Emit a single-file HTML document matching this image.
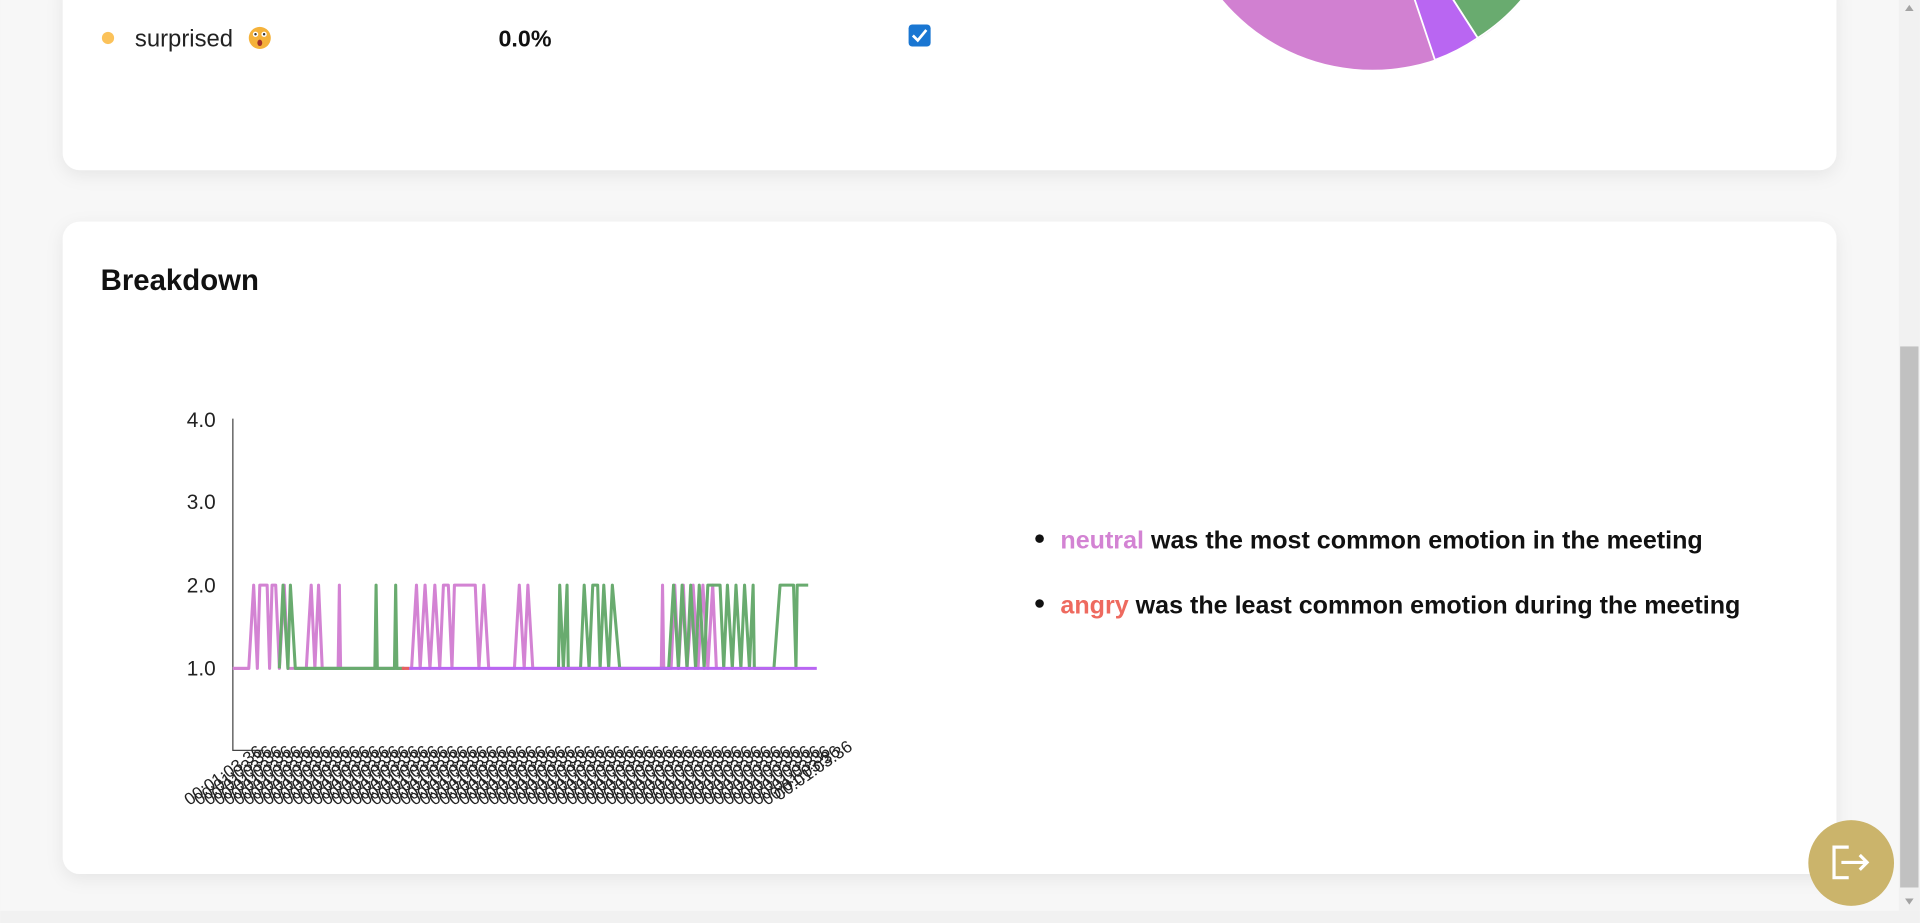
<!DOCTYPE html>
<html><head><meta charset="utf-8"><style>
html,body{margin:0;padding:0;width:1920px;height:923px;overflow:hidden;background:#f6f6f6}
svg{display:block}
text{font-family:"Liberation Sans","DejaVu Sans",sans-serif}
</style></head><body>
<svg width="1920" height="923" viewBox="0 0 1568 754" xmlns="http://www.w3.org/2000/svg">
<defs>
<filter id="sh" x="-5%" y="-10%" width="110%" height="130%"><feDropShadow dx="0" dy="4" stdDeviation="7" flood-color="#000" flood-opacity="0.07"/></filter>
<clipPath id="c1"><rect x="51" y="-20" width="1449" height="159" rx="14"/></clipPath>
</defs>
<rect width="1568" height="754" fill="#f7f7f7"/>
<rect x="51" y="-20" width="1449" height="159" rx="14" fill="#fff" filter="url(#sh)"/>
<rect x="51" y="181" width="1449" height="533" rx="14" fill="#fff" filter="url(#sh)"/>
<circle cx="88" cy="31" r="5" fill="#fbc25a"/>
<text x="110" y="38" font-size="19.5" fill="#222">surprised</text>
<circle cx="212" cy="31" r="9" fill="#f5b23a"/>
<circle cx="208.5" cy="28" r="2.2" fill="#fff"/><circle cx="215.5" cy="28" r="2.2" fill="#fff"/>
<circle cx="208.5" cy="28" r="1" fill="#333"/><circle cx="215.5" cy="28" r="1" fill="#333"/>
<ellipse cx="212" cy="35" rx="2" ry="2.6" fill="#a3302a"/>
<text x="407" y="38" font-size="19" font-weight="bold" fill="#111">0.0%</text>
<rect x="742" y="20" width="18" height="18" rx="3" fill="#1976d2"/>
<path d="M745.5 29 L749.5 33 L756.5 24.5" stroke="#fff" stroke-width="2.2" fill="none"/>
<g clip-path="url(#c1)">
<circle cx="1121" cy="-103" r="160" fill="#d180d1"/>
<path d="M1121 -103 L1172 49 A160 160 0 0 0 1207 31 Z" fill="#b966f2" stroke="#fff" stroke-width="1.5"/>
<path d="M1121 -103 L1207 31 A160 160 0 0 0 1281 -103 Z" fill="#69ab6f" stroke="#fff" stroke-width="1.5"/>
</g>
<text x="82" y="237" font-size="24" font-weight="bold" fill="#111">Breakdown</text>
<g font-size="17" fill="#222" text-anchor="end">
<text x="176" y="349">4.0</text><text x="176" y="416">3.0</text>
<text x="176" y="484">2.0</text><text x="176" y="552">1.0</text>
</g>
<path d="M190 342 V613 H215" stroke="#444" stroke-width="1" fill="none"/>
<g fill="none" stroke-width="2.5" stroke-linejoin="round">
<polyline stroke="#d383d3" points="190,546 203,546 207,478 210,546 212,478 218,478 220,546 222,478 225,478 228,546 232,478 235,546 250,546 254,478 257,546 260,478 263,546 276,546 277,478 278,546 336,546 340,478 343,546 347,478 351,546 355,478 359,546 362,478 366,478 369,546 371,478 388,478 391,546 395,478 399,546 420,546 424,478 428,546 431,478 435,546 438,546 540,546 541,478 542,546 548,546 551,478 554,546 558,478 561,546 566,478 570,546 574,478 578,546 582,478 585,546"/>
<polyline stroke="#69ab6f" points="228,546 231,478 235,546 237,478 241,546 306,546 307,478 308,546 322,546 323,478 324,546 330,546"/>
<polyline stroke="#69ab6f" points="456,546 457,478 460,546 463,478 464,546 474,546 477,478 481,546 484,478 488,478 490,546 493,478 497,546 500,478 506,546 510,546 546,546 550,478 554,546 557,478 561,546 564,478 568,546 571,478 575,546 578,478 588,478 591,546 594,478 598,546 601,478 605,546 608,478 612,546 615,478 616,546 632,546 637,478 648,478 650,546 651,478 660,478"/>
<line x1="190" y1="546" x2="203" y2="546" stroke="#d383d3" stroke-width="2.5"/>
<line x1="241" y1="546" x2="330" y2="546" stroke="#69ab6f" stroke-width="2.5"/>
<line x1="328" y1="546" x2="334" y2="546" stroke="#e76060" stroke-width="2.5"/>
<line x1="334" y1="546" x2="667" y2="546" stroke="#b966f2" stroke-width="2.5"/>
</g>
<g font-size="14" fill="#222" text-anchor="end">
<text transform="translate(215,616) rotate(-35)">00:01:03.36</text>
<text transform="translate(223,616) rotate(-35)">00:01:03.36</text>
<text transform="translate(231,616) rotate(-35)">00:01:03.36</text>
<text transform="translate(239,616) rotate(-35)">00:01:03.36</text>
<text transform="translate(247,616) rotate(-35)">00:01:03.36</text>
<text transform="translate(255,616) rotate(-35)">00:01:03.36</text>
<text transform="translate(263,616) rotate(-35)">00:01:03.36</text>
<text transform="translate(271,616) rotate(-35)">00:01:03.36</text>
<text transform="translate(279,616) rotate(-35)">00:01:03.36</text>
<text transform="translate(287,616) rotate(-35)">00:01:03.36</text>
<text transform="translate(295,616) rotate(-35)">00:01:03.36</text>
<text transform="translate(303,616) rotate(-35)">00:01:03.36</text>
<text transform="translate(311,616) rotate(-35)">00:01:03.36</text>
<text transform="translate(319,616) rotate(-35)">00:01:03.36</text>
<text transform="translate(327,616) rotate(-35)">00:01:03.36</text>
<text transform="translate(335,616) rotate(-35)">00:01:03.36</text>
<text transform="translate(343,616) rotate(-35)">00:01:03.36</text>
<text transform="translate(351,616) rotate(-35)">00:01:03.36</text>
<text transform="translate(359,616) rotate(-35)">00:01:03.36</text>
<text transform="translate(367,616) rotate(-35)">00:01:03.36</text>
<text transform="translate(375,616) rotate(-35)">00:01:03.36</text>
<text transform="translate(383,616) rotate(-35)">00:01:03.36</text>
<text transform="translate(391,616) rotate(-35)">00:01:03.36</text>
<text transform="translate(399,616) rotate(-35)">00:01:03.36</text>
<text transform="translate(407,616) rotate(-35)">00:01:03.36</text>
<text transform="translate(415,616) rotate(-35)">00:01:03.36</text>
<text transform="translate(423,616) rotate(-35)">00:01:03.36</text>
<text transform="translate(431,616) rotate(-35)">00:01:03.36</text>
<text transform="translate(439,616) rotate(-35)">00:01:03.36</text>
<text transform="translate(447,616) rotate(-35)">00:01:03.36</text>
<text transform="translate(455,616) rotate(-35)">00:01:03.36</text>
<text transform="translate(463,616) rotate(-35)">00:01:03.36</text>
<text transform="translate(471,616) rotate(-35)">00:01:03.36</text>
<text transform="translate(479,616) rotate(-35)">00:01:03.36</text>
<text transform="translate(487,616) rotate(-35)">00:01:03.36</text>
<text transform="translate(495,616) rotate(-35)">00:01:03.36</text>
<text transform="translate(503,616) rotate(-35)">00:01:03.36</text>
<text transform="translate(511,616) rotate(-35)">00:01:03.36</text>
<text transform="translate(519,616) rotate(-35)">00:01:03.36</text>
<text transform="translate(527,616) rotate(-35)">00:01:03.36</text>
<text transform="translate(535,616) rotate(-35)">00:01:03.36</text>
<text transform="translate(543,616) rotate(-35)">00:01:03.36</text>
<text transform="translate(551,616) rotate(-35)">00:01:03.36</text>
<text transform="translate(559,616) rotate(-35)">00:01:03.36</text>
<text transform="translate(567,616) rotate(-35)">00:01:03.36</text>
<text transform="translate(575,616) rotate(-35)">00:01:03.36</text>
<text transform="translate(583,616) rotate(-35)">00:01:03.36</text>
<text transform="translate(591,616) rotate(-35)">00:01:03.36</text>
<text transform="translate(599,616) rotate(-35)">00:01:03.36</text>
<text transform="translate(607,616) rotate(-35)">00:01:03.36</text>
<text transform="translate(615,616) rotate(-35)">00:01:03.36</text>
<text transform="translate(623,616) rotate(-35)">00:01:03.36</text>
<text transform="translate(631,616) rotate(-35)">00:01:03.36</text>
<text transform="translate(639,616) rotate(-35)">00:01:03.36</text>
<text transform="translate(647,616) rotate(-35)">00:01:03.36</text>
<text transform="translate(655,616) rotate(-35)">00:01:03.36</text>
<text transform="translate(663,616) rotate(-35)">00:01:03.36</text>
<text transform="translate(671,616) rotate(-35)">00:01:03.36</text>
<text transform="translate(679,616) rotate(-35)">00:01:03.36</text>
<text transform="translate(687,616) rotate(-35)">00:01:03.36</text>
<text transform="translate(697,612) rotate(-35)">00:01:03.36</text>
</g>
<circle cx="849" cy="440" r="3.5" fill="#111"/>
<text x="866" y="448" font-size="20.5" font-weight="bold" fill="#111"><tspan fill="#d383d3">neutral</tspan> was the most common emotion in the meeting</text>
<circle cx="849" cy="493" r="3.5" fill="#111"/>
<text x="866" y="501" font-size="20.5" font-weight="bold" fill="#111"><tspan fill="#ee6a5f">angry</tspan> was the least common emotion during the meeting</text>
<rect x="1551" y="0" width="17" height="744" fill="#f1f1f1"/>
<rect x="1552" y="283" width="15" height="442" fill="#c1c1c1"/>
<path d="M1556 9 L1559.5 4 L1563 9 Z" fill="#a3a3a3"/>
<path d="M1556 734 L1559.5 739 L1563 734 Z" fill="#a3a3a3"/>
<rect x="0" y="744" width="1568" height="10" fill="#f1f1f1"/>
<circle cx="1512" cy="705" r="35" fill="#cbb46b"/>
<path d="M1510 692 H1498 V717 H1510" stroke="#fff" stroke-width="2.6" fill="none"/>
<path d="M1504 704.5 H1525 M1519 698.5 L1525 704.5 L1519 710.5" stroke="#fff" stroke-width="2.6" fill="none"/>
</svg>
</body></html>
